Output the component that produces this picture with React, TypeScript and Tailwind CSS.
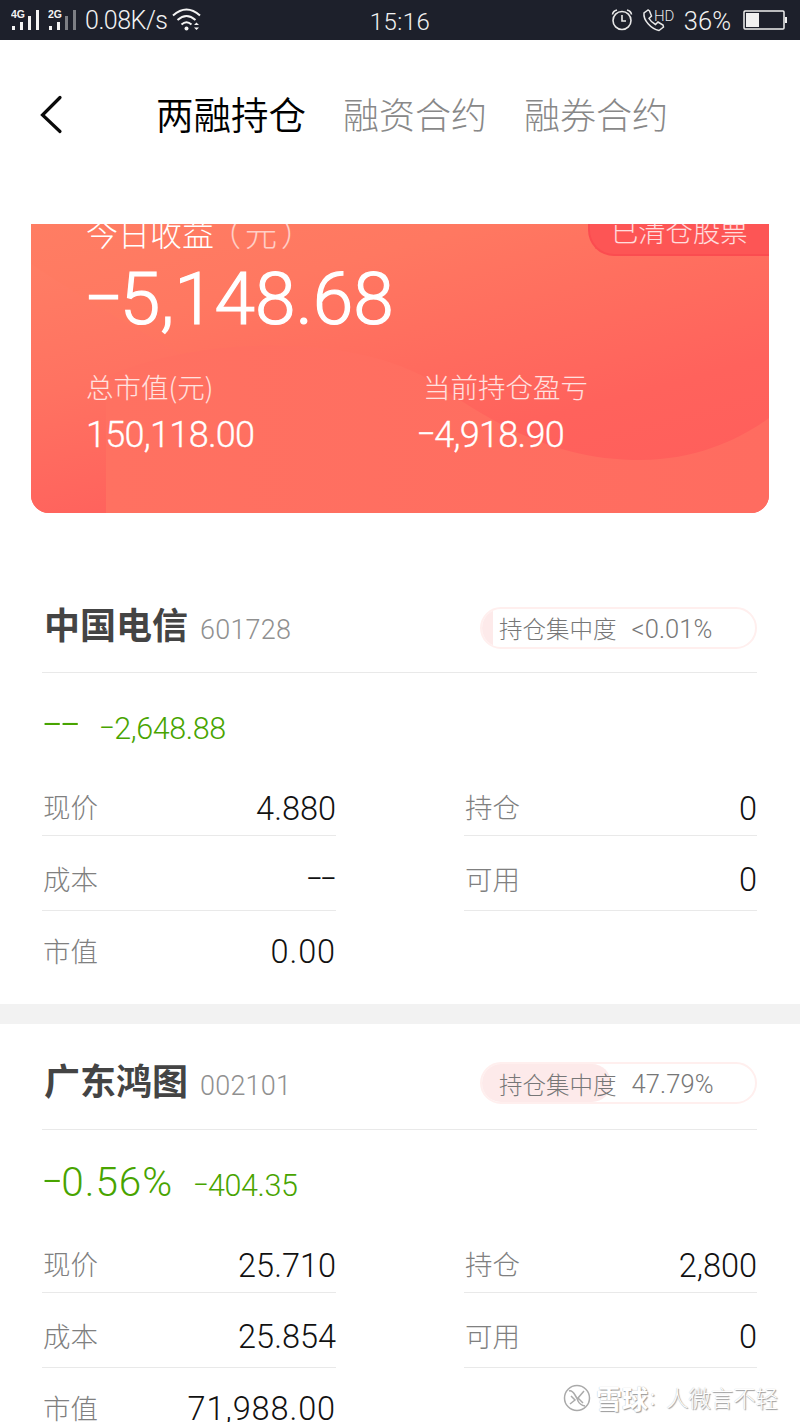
import { clsx } from "clsx";

const holdings = [
  {
    name: "中国电信",
    code: "601728",
    ratio: "<0.01%",
    percent: "--",
    profit: "-2,648.88",
    price: "4.880",
    cost: "--",
    value: "0.00",
    amount: "0",
    available: "0",
  },
  {
    name: "广东鸿图",
    code: "002101",
    ratio: "47.79%",
    percent: "-0.56%",
    profit: "-404.35",
    price: "25.710",
    cost: "25.854",
    value: "71,988.00",
    amount: "2,800",
    available: "0",
  },
];

// Latin digits with the minus signs stretched to the width of a figure dash
function Num({ value, className }: { value: string; className?: string }) {
  return (
    <span className={clsx("whitespace-nowrap font-['Roboto',sans-serif] font-light", className)}>
      {value.split("").map((char, i) =>
        char === "-" ? (
          <span key={i} className="relative -top-[0.06em] inline-block w-[0.45em] origin-left scale-x-[1.6] leading-none">
            -
          </span>
        ) : (
          char
        )
      )}
    </span>
  );
}

function Signal({ label, weak }: { label: string; weak?: boolean }) {
  return (
    <svg width="30" height="24" viewBox="0 0 30 24" fill="#f4f4f4">
      <text x="0" y="9.5" fontSize="10.5" fontWeight="700" fontFamily="Liberation Sans, sans-serif">
        {label}
      </text>
      <rect x="1" y="18" width="3" height="4" />
      <rect x="9" y="14" width="3" height="8" />
      <rect x="17" y="8" width="3" height="14" opacity={weak ? 0.45 : 1} />
      <rect x="25" y="2" width="3" height="20" opacity={weak ? 0.45 : 1} />
    </svg>
  );
}

function StatusBar() {
  return (
    <div className="grid h-10 grid-cols-[1fr_auto_1fr] items-center bg-[#1d202b] text-[#f2f2f2]">
      <div className="flex items-center pl-[11px]">
        <Signal label="4G" />
        <span className="w-[7px]" />
        <Signal label="2G" weak />
        <Num value="0.08K/s" className="ml-[7px] mt-[2px] text-[25px] tracking-[-0.5px]" />
        <svg className="ml-[4px]" width="30" height="24" viewBox="0 0 30 24" fill="none" stroke="#f4f4f4" strokeWidth="2">
          <path d="M1 7.500Q14.500-4.500 28 7.500M5.500 12Q14.500 4 23.500 12M9.500 16.500Q14.500 12 19.500 16.500" />
          <circle cx="14.500" cy="20.500" r="2" fill="#f4f4f4" stroke="none" />
          <path d="M22 17l2.500-2.500L27 17zM22 19.500l2.500 2.500 2.500-2.500z" fill="#f4f4f4" stroke="none" />
        </svg>
      </div>
      <Num value="15:16" className="mt-[3px] text-[24px] tracking-[0.4px]" />
      <div className="flex items-center justify-end pr-[11px]">
        <svg width="22" height="24" viewBox="0 0 22 24" fill="none" stroke="#e8e8e8" strokeWidth="1.600">
          <circle cx="11" cy="12.500" r="9" />
          <path d="M11 7v6h4M1.500 6.500Q2 3 6 2M20.500 6.500Q20 3 16 2" />
        </svg>
        <svg className="ml-[9px]" width="33" height="24" viewBox="0 0 33 24" fill="none" stroke="#e8e8e8" strokeWidth="1.500">
          <path d="M6 2 2 5C1 12 9 21 17 22.500L21.500 19 21 17 16 14 13.500 16.500Q9 14 7 10.500L9.500 8 7.500 3Z" />
          <text x="12" y="12.500" fontSize="15" fontFamily="Roboto, sans-serif" fill="#e8e8e8" stroke="none">
            HD
          </text>
        </svg>
        <Num value="36%" className="ml-[9px] mt-[2px] text-[25.500px]" />
        <svg className="ml-[12px]" width="46" height="22" viewBox="0 0 46 22">
          <rect x="1" y="2" width="40" height="18" rx="1" fill="none" stroke="#f0f0f0" strokeWidth="1.500" />
          <rect x="3" y="4" width="13" height="14" fill="#f0f0f0" />
          <rect x="42" y="8" width="2" height="6" fill="#f0f0f0" />
        </svg>
      </div>
    </div>
  );
}

function Header() {
  return (
    <div className="flex h-[184px] items-start pl-10 pt-[49px]">
      <svg className="mt-[6px] shrink-0" width="24" height="40" viewBox="0 0 24 40" fill="none" stroke="#0a0a0a" strokeWidth="3.200" strokeLinecap="round">
        <path d="M20 2.500 2.500 20 20 36.500" />
      </svg>
      <div className="ml-[92px] flex items-center leading-[48px]">
        <span className="text-[37.500px] font-[350] text-black">两融持仓</span>
        <span className="ml-[37px] text-[36px] text-[#888]">融资合约</span>
        <span className="ml-[37px] text-[36px] text-[#888]">融券合约</span>
      </div>
    </div>
  );
}

function SummaryCard() {
  return (
    <div className="relative mx-[31px] h-[289px] overflow-hidden rounded-b-[18px] bg-[linear-gradient(165deg,#ff7d63_0%,#ff7861_25%,#ff625c_68%,#ff5d5b_100%)] text-white">
      <svg className="absolute inset-0" width="738" height="289" viewBox="0 0 738 289">
        <defs>
          <linearGradient id="wave" x1="0" y1="0" x2="1" y2="0">
            <stop offset="0" stopColor="#ff7161" />
            <stop offset="1" stopColor="#ff6c60" />
          </linearGradient>
          <linearGradient id="side" gradientUnits="userSpaceOnUse" x1="0" y1="40" x2="60" y2="289">
            <stop offset="0" stopColor="#ff7d64" />
            <stop offset="0.500" stopColor="#ff7261" />
            <stop offset="1" stopColor="#ff635d" />
          </linearGradient>
        </defs>
        <path d="M0 40Q60 80 150 130V289H0Z" fill="url(#side)" />
        <path d="M75 153C170 110 330 110 405 160C470 205 530 236 610 236C665 236 710 215 738 194V289H75Z" fill="url(#wave)" />
      </svg>
      <div className="relative flex justify-between">
        <div className="-mt-[14px] ml-[55px] flex whitespace-nowrap text-[32px] leading-[44px]">
          <span>今日收益</span>
          <span className="-mr-[8px] -ml-[5px] w-[44px] text-white/65">（</span>
          <span className="text-white/65">元</span>
          <span className="ml-[4px] text-white/65">）</span>
        </div>
        <div className="-mt-4 h-[48px] w-[181px] rounded-bl-[26px] border-b-2 border-l-2 border-[#fb4c50] bg-[#fd5555] pl-[21px] text-[27.300px] leading-[44px] text-white/80">
          已清仓股票
        </div>
      </div>
      <div className="relative ml-[56px] mt-[3px] h-[82px]">
        <Num value="-5,148.68" className="text-[73px] leading-[80px] tracking-[-0.100px] [-webkit-text-stroke:1.2px_white]" />
      </div>
      <div className="relative ml-[55px] mt-[25px] flex">
        <div className="w-[332px]">
          <div className="text-[27.500px] leading-[40px] text-white/80">总市值(元)</div>
          <Num value="150,118.00" className="text-[36px] leading-[59px] tracking-[-0.7px] [-webkit-text-stroke:0.3px_white]" />
        </div>
        <div>
          <div className="ml-[5px] text-[27.500px] leading-[40px] text-white/80">当前持仓盈亏</div>
          <Num value="-4,918.90" className="text-[36px] leading-[59px] tracking-[-0.7px] [-webkit-text-stroke:0.3px_white]" />
        </div>
      </div>
    </div>
  );
}

function Row({ label, value, className }: { label: string; value: string; className: string }) {
  return (
    <div className={clsx("flex items-center justify-between", className)}>
      <span className="-mt-[5px] ml-[1px] text-[27.500px] tracking-normal text-[#808080]">{label}</span>
      <Num value={value} className="text-[#111]" />
    </div>
  );
}

function Holding({ item, fill, header }: { item: (typeof holdings)[number]; fill: string; header: string }) {
  return (
    <section className="h-[437px] pl-[42px] pr-[43px]">
      <div className={clsx("flex h-[106px] items-center justify-between border-b border-[#e9e9e9]", header)}>
        <div className="-mt-[4px] flex items-baseline">
          <h2 className="ml-[2px] text-[36px] font-bold leading-[50px] text-[#444]">{item.name}</h2>
          <Num value={item.code} className="ml-[12px] text-[27px] tracking-[0.200px] text-[#909090]" />
        </div>
        <div className="mt-[2px] flex h-[42px] w-[277px] overflow-hidden rounded-full border-2 border-[#ffefee]">
          <div className={clsx("h-full shrink-0 bg-[#fdeaea]", fill)} />
          <div className="relative flex items-center whitespace-pre pt-[3px] text-[23.500px] text-[#777]">
            <span>持仓集中度</span>
            <Num value={item.ratio} className="ml-[15px] text-[25.500px] tracking-[0.100px]" />
          </div>
        </div>
      </div>
      <div className="flex h-[103px] items-baseline pt-[27px] text-[#48a400]">
        <Num value={item.percent} className="ml-[1px] text-[40.500px] leading-[50px] tracking-[1px]" />
        <Num value={item.profit} className="ml-[21px] text-[30.500px] tracking-[-0.400px]" />
      </div>
      <div className="flex justify-between text-[32.500px] leading-[40px]">
        <div className="w-[294px]">
          <Row label="现价" value={item.price} className="h-[60px] border-b border-[#e9e9e9] pt-[6px]" />
          <Row label="成本" value={item.cost} className="h-[75px] border-b border-[#e9e9e9] pt-[15px] pb-[1px]" />
          <Row label="市值" value={item.value} className="h-[74px] pt-[8px] tracking-[0.900px]" />
        </div>
        <div className="w-[293px]">
          <Row label="持仓" value={item.amount} className="h-[60px] border-b border-[#e9e9e9] pt-[6px]" />
          <Row label="可用" value={item.available} className="h-[75px] border-b border-[#e9e9e9] pt-[15px] pb-[1px]" />
        </div>
      </div>
    </section>
  );
}

function Watermark() {
  return (
    <div className="absolute bottom-[5px] right-[22px] flex items-center whitespace-nowrap text-white [text-shadow:1px_1px_1px_#999,0_0_1px_#bbb]">
      <svg width="30" height="30" viewBox="0 0 30 30" fill="none" stroke="#aaa" strokeWidth="1.500">
        <circle cx="15" cy="15" r="12.500" />
        <path d="M7 8Q10 7 13 12T16 18Q18 22 23 23M22 8L16 15L21 20M9 13L13 17L8 21" />
      </svg>
      <span className="ml-[4px] text-[26px] font-bold">雪球</span>
      <span className="text-[18px]">：</span>
      <span className="text-[22.400px]">人微言不轻</span>
    </div>
  );
}

export default function App() {
  return (
    <div className="relative h-[1422px] w-[800px] overflow-hidden bg-white font-['Noto_Sans_CJK_SC',sans-serif] font-light">
      <StatusBar />
      <Header />
      <SummaryCard />
      <div className="h-[54px]" />
      <Holding item={holdings[0]} fill="w-[11px] mr-[6px]" header="pt-[14px]" />
      <div className="h-5 bg-[#f2f2f2]" />
      <Holding item={holdings[1]} fill="w-[129px] -mr-[112px] rounded-r-full" header="pt-[11px]" />
      <Watermark />
    </div>
  );
}
